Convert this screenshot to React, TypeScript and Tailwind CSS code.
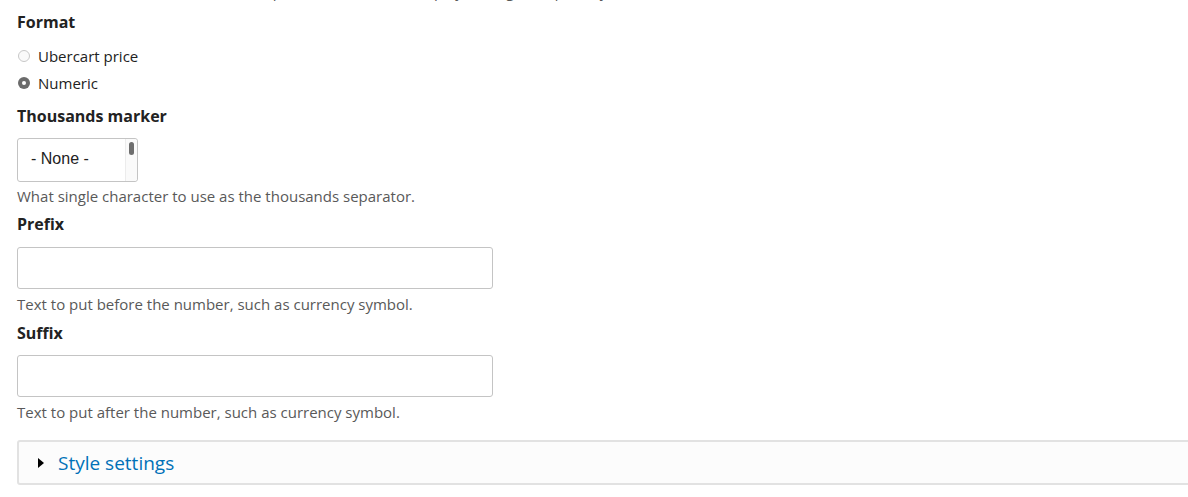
import React from "react";

const font = { fontFamily: '"Open Sans", "Noto Sans", sans-serif' };

function Radio({ checked, label }: { checked?: boolean; label: string }) {
  return (
    <div className="flex items-center h-[20px] text-[15px] text-[#222]">
      {checked ? (
        <span className="w-[12px] h-[12px] rounded-full bg-[#6b6b6b] flex items-center justify-center mr-[8px] ml-[1px]">
          <span className="w-[4px] h-[4px] rounded-full bg-white" />
        </span>
      ) : (
        <span className="w-[12px] h-[12px] rounded-full border border-[#c8c8c8] bg-[#fafafa] mr-[8px] ml-[1px]" />
      )}
      <span>{label}</span>
    </div>
  );
}

function Label({ children, className = "" }: { children: React.ReactNode; className?: string }) {
  return <div className={`h-[20px] leading-[20px] text-[16px] font-bold text-[#222] ${className}`}>{children}</div>;
}

function Desc({ children, className = "" }: { children: React.ReactNode; className?: string }) {
  return <div className={`h-[20px] leading-[20px] text-[15px] text-[#595959] ${className}`}>{children}</div>;
}

export default function App() {
  return (
    <div className="bg-white w-[1188px] h-[497px] overflow-hidden pl-[17px]" style={font}>
      <div className="mt-[-19px] h-[20px] leading-[20px] text-[15px] text-[#595959] whitespace-nowrap">
        The format of the number; Ubercart price uses the store display settings for quantity.
      </div>
      <Label className="mt-[11px]">Format</Label>
      <div className="mt-[14px]">
        <Radio label="Ubercart price" />
      </div>
      <div className="mt-[7px]">
        <Radio checked label="Numeric" />
      </div>
      <Label className="mt-[13px]">Thousands marker</Label>
      <div className="mt-[12px] relative w-[121px] h-[44px] border border-[#c4c4c4] rounded-[3px] bg-white">
        <div
          className="absolute left-[13px] top-[10px] text-[16px] leading-[20px] text-[#222]"
          style={{ fontFamily: '"Liberation Sans", Arial, sans-serif' }}
        >
          - None -
        </div>
        <div className="absolute right-0 top-0 bottom-0 w-[12px] border-l border-[#ececec] bg-[#fafafa] rounded-r-[3px]">
          <div className="absolute left-[3px] top-[3px] w-[5px] h-[13px] rounded-full bg-[#6e6e6e]" />
        </div>
      </div>
      <Desc className="mt-[4px]">What single character to use as the thousands separator.</Desc>
      <Label className="mt-[8px]">Prefix</Label>
      <div className="mt-[13px] w-[476px] h-[42px] border border-[#c4c4c4] rounded-[3px] bg-white" />
      <Desc className="mt-[5px]">Text to put before the number, such as currency symbol.</Desc>
      <Label className="mt-[9px]">Suffix</Label>
      <div className="mt-[12px] w-[476px] h-[42px] border border-[#c4c4c4] rounded-[3px] bg-white" />
      <Desc className="mt-[5px]">Text to put after the number, such as currency symbol.</Desc>
      <div className="mt-[18px] w-[1200px] h-[45px] border-2 border-[#e2e2e2] rounded-[3px] bg-[#fcfcfc] flex items-center pl-[19px]">
        <svg width="7" height="10" viewBox="0 0 7 10" className="mr-[13px]">
          <path d="M0 0 L6 5 L0 10 Z" fill="#000" />
        </svg>
        <span className="text-[19px] text-[#0071b8] leading-[24px]">Style settings</span>
      </div>
    </div>
  );
}
